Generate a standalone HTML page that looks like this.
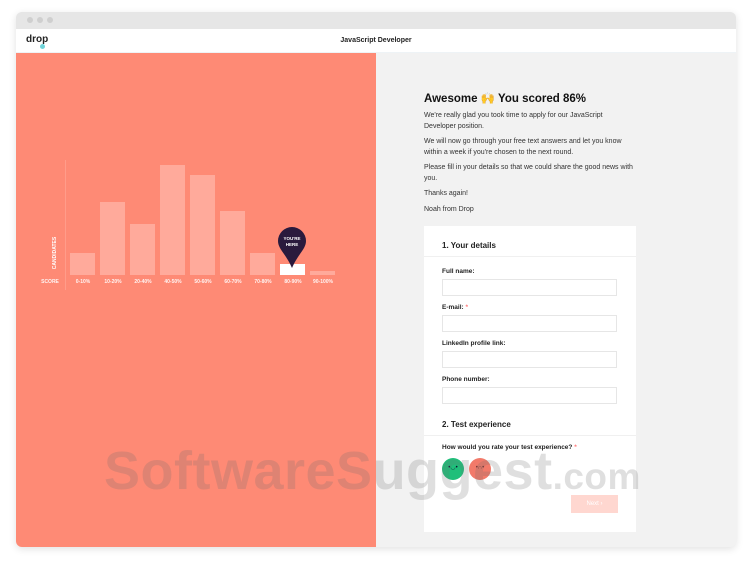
<!DOCTYPE html>
<html><head><meta charset="utf-8"><style>
*{margin:0;padding:0;box-sizing:border-box}
body{width:753px;height:568px;background:#fff;font-family:"Liberation Sans",sans-serif;position:relative;overflow:hidden}
.win{position:absolute;left:16px;top:12px;width:720px;height:535px;border-radius:6px;overflow:hidden;background:#f2f2f2;box-shadow:0 2px 8px rgba(0,0,0,.12)}
.tb{height:17px;background:#e6e6e6;position:relative}
.tb i{position:absolute;top:5px;width:6px;height:6px;border-radius:50%;background:#cfcfcf}
.hd{height:24px;background:#fff;position:relative;border-bottom:1px solid #eef3f6}
.bar{position:absolute;width:25px;background:#ffaa9b}
.lbl{position:absolute;top:279px;font-size:5px;color:#fff;font-weight:bold;width:30px;text-align:center;opacity:.9}
.p{font-size:7px;color:#333;line-height:10.8px;margin-bottom:4.5px}
.f{font-size:6.5px;font-weight:bold;color:#222;margin:0 0 0 18px}
.in{margin:4px 0 0 18px;width:175px;height:17px;border:1px solid #e6e6e6}
</style></head><body>
<div class="win">
<div class="tb"><i style="left:11px"></i><i style="left:21px"></i><i style="left:31px"></i></div>
<div class="hd"><div style="position:absolute;left:10px;top:5px;font-size:10px;font-weight:bold;color:#222">drop</div><div style="position:absolute;left:24px;top:15px;width:5px;height:5px;border-radius:50%;background:#6fd3d8"></div><div style="position:absolute;left:0;width:720px;top:8px;text-align:center;font-size:7px;font-weight:bold;color:#222">JavaScript Developer</div></div>
</div>
<div style="position:absolute;left:16px;top:53px;width:360px;height:494px;background:#fe8a75;border-bottom-left-radius:6px"></div>
<div style="position:absolute;left:65px;top:160px;width:1px;height:130px;background:#ff9c8a"></div>
<div style="position:absolute;left:39px;top:250px;font-size:5px;color:#fff;font-weight:bold;transform:rotate(-90deg)">CANDIDATES</div>
<div class="bar" style="left:70px;top:253px;height:22px"></div>
<div class="bar" style="left:100px;top:202px;height:73px"></div>
<div class="bar" style="left:130px;top:224px;height:51px"></div>
<div class="bar" style="left:160px;top:165px;height:110px"></div>
<div class="bar" style="left:190px;top:175px;height:100px"></div>
<div class="bar" style="left:220px;top:211px;height:64px"></div>
<div class="bar" style="left:250px;top:253px;height:22px"></div>
<div class="bar" style="left:280px;top:264px;height:11px;background:#fff"></div>
<div class="bar" style="left:310px;top:271px;height:4px"></div>
<svg style="position:absolute;left:276px;top:226px" width="32" height="44"><path d="M16 1a14 14 0 0 1 14 14c0 8-8 13-14 27C10 28 2 23 2 15A14 14 0 0 1 16 1z" fill="#2a1a3d"/><text x="16" y="14" font-size="4.5" fill="#fff" text-anchor="middle" font-family="Liberation Sans" font-weight="bold">YOU'RE</text><text x="16" y="20" font-size="4.5" fill="#fff" text-anchor="middle" font-family="Liberation Sans" font-weight="bold">HERE</text></svg>
<div class="lbl" style="left:35px">SCORE</div>
<div class="lbl" style="left:68px">0-10%</div><div class="lbl" style="left:98px">10-20%</div><div class="lbl" style="left:128px">20-40%</div><div class="lbl" style="left:158px">40-50%</div><div class="lbl" style="left:188px">50-60%</div><div class="lbl" style="left:218px">60-70%</div><div class="lbl" style="left:248px">70-80%</div><div class="lbl" style="left:278px">80-90%</div><div class="lbl" style="left:308px">90-100%</div>
<div style="position:absolute;left:424px;top:91px;width:212px">
<div style="font-size:11.5px;font-weight:bold;color:#111;margin-bottom:6px">Awesome <span style="color:#f5c542">🙌</span> You scored 86%</div>
<p class="p">We're really glad you took time to apply for our JavaScript Developer position.</p>
<p class="p">We will now go through your free text answers and let you know within a week if you're chosen to the next round.</p>
<p class="p">Please fill in your details so that we could share the good news with you.</p>
<p class="p">Thanks again!</p>
<p class="p">Noah from Drop</p>
</div>
<div style="position:absolute;left:424px;top:226px;width:212px;height:306px;background:#fff">
<div style="font-size:8px;font-weight:bold;color:#222;padding:15px 0 0 18px;height:31px;border-bottom:1px solid #f0f0f0">1. Your details</div>
<div class="f" style="margin-top:11px">Full name:</div><div class="in"></div>
<div class="f" style="margin-top:8px">E-mail: <span style="color:#f77">*</span></div><div class="in"></div>
<div class="f" style="margin-top:8px">LinkedIn profile link:</div><div class="in"></div>
<div class="f" style="margin-top:8px">Phone number:</div><div class="in"></div>
<div style="font-size:8px;font-weight:bold;color:#222;padding:16px 0 0 18px;height:32px;border-bottom:1px solid #f0f0f0">2. Test experience</div>
<div class="f" style="margin-top:8px">How would you rate your test experience? <span style="color:#f77">*</span></div>
<div style="position:absolute;left:18px;top:232px;width:22px;height:22px;border-radius:50%;background:#1fbf7a;color:#113;font-size:6px;text-align:center;line-height:20px">•◡•</div>
<div style="position:absolute;left:45px;top:232px;width:22px;height:22px;border-radius:50%;background:#f27a6a;color:#733;font-size:6px;text-align:center;line-height:20px">•∩•</div>
<div style="position:absolute;left:147px;top:269px;width:47px;height:18px;background:#ffd7d0;color:#fff;font-size:6px;text-align:center;line-height:18px">Next ›</div>
</div>
<div style="position:absolute;left:104px;top:440px;font-size:54px;font-weight:bold;color:rgba(110,110,110,.22);letter-spacing:0.5px;white-space:nowrap">SoftwareSuggest<span style="font-size:37px">.com</span></div>
</body></html>
